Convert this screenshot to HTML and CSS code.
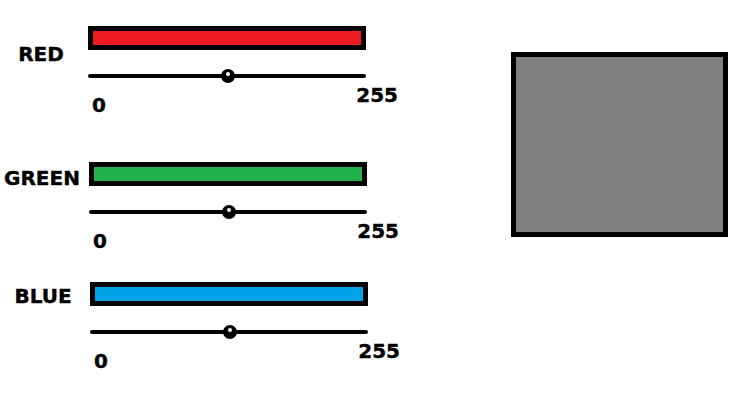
FILE: index.html
```html
<!DOCTYPE html>
<html lang="en">
<head>
<meta charset="utf-8">
<title>Colour mixer</title>
<link rel="stylesheet" href="styles.css">
</head>
<body>
<main class="mixer">
  <section class="channels">
    <div class="channel channel--red">
      <div class="channel-head">
        <span class="channel-name">RED</span>
        <div class="swatch swatch--red"></div>
      </div>
      <div class="slider"><div class="track"></div><div class="knob"></div></div>
      <div class="scale"><span class="scale-min">0</span><span class="scale-max">255</span></div>
    </div>
    <div class="channel channel--green">
      <div class="channel-head">
        <span class="channel-name">GREEN</span>
        <div class="swatch swatch--green"></div>
      </div>
      <div class="slider"><div class="track"></div><div class="knob"></div></div>
      <div class="scale"><span class="scale-min">0</span><span class="scale-max">255</span></div>
    </div>
    <div class="channel channel--blue">
      <div class="channel-head">
        <span class="channel-name">BLUE</span>
        <div class="swatch swatch--blue"></div>
      </div>
      <div class="slider"><div class="track"></div><div class="knob"></div></div>
      <div class="scale"><span class="scale-min">0</span><span class="scale-max">255</span></div>
    </div>
  </section>
  <div class="preview"></div>
</main>
</body>
</html>
```
FILE: styles.css
```css
html, body {
  margin: 0;
  padding: 0;
  background: #ffffff;
}

body {
  font-family: "DejaVu Sans", "Liberation Sans", sans-serif;
  font-weight: 700;
  font-size: 20px;
  line-height: 24px;
  color: #000000;
  -webkit-text-stroke: 0.4px #000000;
}

.mixer {
  display: flex;
  align-items: flex-start;
}

.channels {
  display: flex;
  flex-direction: column;
  padding-top: 26px;
}

.channel {
  display: flex;
  flex-direction: column;
}

.channel--green {
  margin-top: 45px;
  padding-left: 1px;
}

.channel--blue {
  margin-top: 29px;
  padding-left: 2px;
}

/* the label may sit lower than the swatch without pushing the slider down */
.channel-head {
  display: flex;
  align-items: flex-start;
  gap: 6px;
  height: 24px;
}

.channel-name {
  width: 82px;
  text-align: center;
  white-space: nowrap;
}

.channel--red .channel-name { margin-top: 16px; }
.channel--green .channel-name { margin-top: 4px; }
.channel--blue .channel-name { margin-top: 2px; }

.swatch {
  flex: none;
  width: 278px;
  height: 24px;
  box-sizing: border-box;
  border: 5px solid #000000;
}

.swatch--red { background: #ed1c24; }
.swatch--green { background: #22b14c; }
.swatch--blue { background: #00a2e8; }

.slider {
  position: relative;
  margin-left: 88px;
  margin-top: 19px;
  width: 278px;
  height: 14px;
  display: flex;
  align-items: center;
}

.track {
  width: 100%;
  height: 4px;
  border-radius: 2px;
  background: #000000;
}

.knob {
  position: absolute;
  left: 133px;
  top: 0;
  width: 14px;
  height: 14px;
  border-radius: 50%;
  background: #000000;
}

.knob::after {
  content: "";
  position: absolute;
  left: 5px;
  top: 3px;
  width: 4px;
  height: 4px;
  border-radius: 50%;
  background: #ffffff;
}

.scale {
  margin-left: 88px;
  width: 310px;
  display: flex;
  justify-content: space-between;
  align-items: flex-start;
}

.scale-min {
  padding-left: 4px;
  margin-top: 10px;
}

.preview {
  margin-top: 52px;
  margin-left: 111px;
  width: 217px;
  height: 185px;
  box-sizing: border-box;
  border: 5px solid #000000;
  background: #808080;
}
```
